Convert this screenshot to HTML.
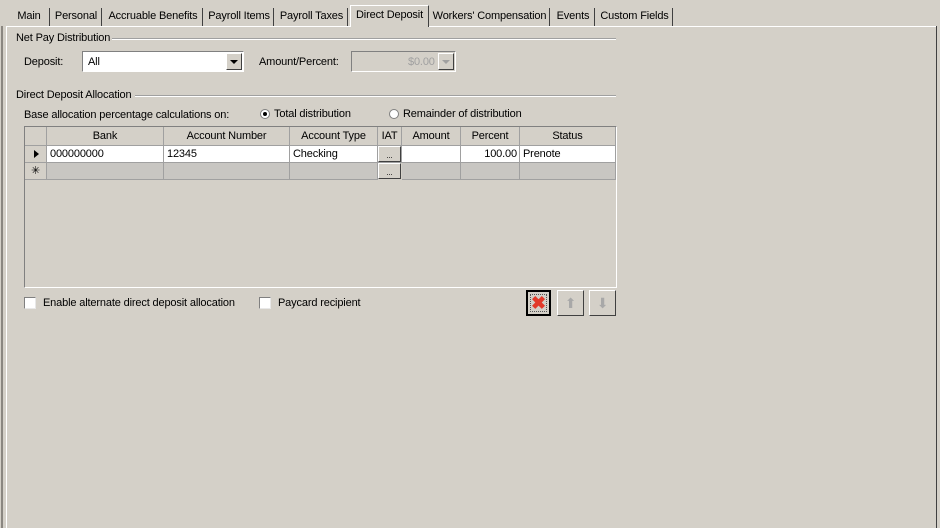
<!DOCTYPE html>
<html><head><style>
*{margin:0;padding:0;box-sizing:border-box}
body{width:940px;height:528px;background:#d4d0c8;font-family:"Liberation Sans",sans-serif;font-size:11px;letter-spacing:-0.15px;color:#000;position:relative;overflow:hidden}
.a{position:absolute;white-space:nowrap}
.tab{position:absolute;top:8px;height:18px;border-right:1px solid #404040;padding:2px 0 0 0;text-align:center;line-height:13px}
.line{position:absolute;height:2px;border-top:1px solid #a0a0a0;border-bottom:1px solid #fff}
.sunk{position:absolute;border-top:1px solid #808080;border-left:1px solid #808080;border-right:1px solid #fff;border-bottom:1px solid #fff}
.cb{position:absolute;width:12px;height:12px;background:#fff;border-top:1px solid #808080;border-left:1px solid #808080;border-right:1px solid #e8e8e8;border-bottom:1px solid #e8e8e8}
.c{position:absolute;border-right:1px solid #a0a0a0;border-bottom:1px solid #a0a0a0;line-height:16px;padding-left:3px;overflow:hidden}
.g{background:#c8c6c2}
.btn{position:absolute;border-top:1px solid #fff;border-left:1px solid #fff;border-right:1px solid #404040;border-bottom:1px solid #404040;background:#d4d0c8}
</style></head><body>
<div class="a" style="left:1px;top:26px;width:2px;height:502px;background:#8a8680"></div>
<div class="a" style="left:6px;top:26px;width:1px;height:502px;background:#fff"></div>
<div class="a" style="left:6px;top:26px;width:931px;height:1px;background:#fff"></div>
<div class="a" style="left:936px;top:26px;width:1px;height:502px;background:#404040"></div>
<div class="tab" style="left:9px;width:41px">Main</div>
<div class="tab" style="left:51px;width:51px">Personal</div>
<div class="tab" style="left:104px;width:99px">Accruable Benefits</div>
<div class="tab" style="left:205px;width:69px">Payroll Items</div>
<div class="tab" style="left:276px;width:72px">Payroll Taxes</div>
<div class="tab" style="left:350px;top:5px;height:22px;width:79px;background:#d4d0c8;padding-top:3px;border-top:1px solid #fff;border-left:1px solid #fff">Direct Deposit</div>
<div class="tab" style="left:430px;width:120px">Workers' Compensation</div>
<div class="tab" style="left:552px;width:43px">Events</div>
<div class="tab" style="left:597px;width:76px">Custom Fields</div>
<div class="a" style="left:16px;top:32px">Net Pay Distribution</div>
<div class="line" style="left:112px;top:38px;width:504px"></div>
<div class="a" style="left:24px;top:56px">Deposit:</div>
<div class="sunk" style="left:82px;top:51px;width:162px;height:21px;background:#fff"></div>
<div class="a" style="left:88px;top:56px">All</div>
<div class="btn" style="left:226px;top:53px;width:16px;height:17px"></div>
<div class="a" style="left:230px;top:60px;width:0;height:0;border-left:4px solid transparent;border-right:4px solid transparent;border-top:4px solid #000"></div>
<div class="a" style="left:259px;top:56px">Amount/Percent:</div>
<div class="sunk" style="left:351px;top:51px;width:105px;height:21px"></div>
<div class="a" style="left:408px;top:56px;color:#a0a0a0">$0.00</div>
<div class="btn" style="left:438px;top:53px;width:16px;height:17px"></div>
<div class="a" style="left:442px;top:60px;width:0;height:0;border-left:4px solid transparent;border-right:4px solid transparent;border-top:4px solid #a0a0a0"></div>
<div class="a" style="left:16px;top:89px">Direct Deposit Allocation</div>
<div class="line" style="left:135px;top:95px;width:481px"></div>
<div class="a" style="left:24px;top:109px">Base allocation percentage calculations on:</div>
<div class="a" style="left:260px;top:109px;width:10px;height:10px;border-radius:50%;background:#fff;border:1px solid #808080"></div>
<div class="a" style="left:263px;top:112px;width:4px;height:4px;border-radius:50%;background:#000"></div>
<div class="a" style="left:274px;top:108px">Total distribution</div>
<div class="a" style="left:389px;top:109px;width:10px;height:10px;border-radius:50%;background:#fff;border:1px solid #808080"></div>
<div class="a" style="left:403px;top:108px">Remainder of distribution</div>
<div class="a" style="left:24px;top:126px;width:593px;height:162px;border:1px solid #808080;border-right-color:#fff;border-bottom-color:#fff;background:#d4d0c8"></div>
<div class="c" style="left:25px;top:127px;width:22px;height:19px"></div>
<div class="c" style="left:47px;top:127px;width:117px;height:19px;text-align:center;padding:1px 0">Bank</div>
<div class="c" style="left:164px;top:127px;width:126px;height:19px;text-align:center;padding:1px 0">Account Number</div>
<div class="c" style="left:290px;top:127px;width:88px;height:19px;text-align:center;padding:1px 0">Account Type</div>
<div class="c" style="left:378px;top:127px;width:24px;height:19px;text-align:center;padding:1px 0">IAT</div>
<div class="c" style="left:402px;top:127px;width:59px;height:19px;text-align:center;padding:1px 0">Amount</div>
<div class="c" style="left:461px;top:127px;width:59px;height:19px;text-align:center;padding:1px 0">Percent</div>
<div class="c" style="left:520px;top:127px;width:96px;height:19px;text-align:center;padding:1px 0">Status</div>
<div class="c" style="left:25px;top:146px;width:22px;height:17px"></div>
<div class="a" style="left:34px;top:150px;width:0;height:0;border-top:4px solid transparent;border-bottom:4px solid transparent;border-left:5px solid #000"></div>
<div class="c" style="left:47px;top:146px;width:117px;height:17px;background:#fff">000000000</div>
<div class="c" style="left:164px;top:146px;width:126px;height:17px;background:#fff">12345</div>
<div class="c" style="left:290px;top:146px;width:88px;height:17px;background:#fff">Checking</div>
<div class="c" style="left:378px;top:146px;width:24px;height:17px"></div>
<div class="btn" style="left:378px;top:146px;width:23px;height:16px;font-size:8px;text-align:center;line-height:18px">...</div>
<div class="c" style="left:402px;top:146px;width:59px;height:17px;background:#fff"></div>
<div class="c" style="left:461px;top:146px;width:59px;height:17px;background:#fff;text-align:right;padding-right:2px">100.00</div>
<div class="c" style="left:520px;top:146px;width:96px;height:17px;background:#fff">Prenote</div>
<div class="c" style="left:25px;top:163px;width:22px;height:17px;text-align:center;padding:0">✳</div>
<div class="c g" style="left:47px;top:163px;width:117px;height:17px"></div>
<div class="c g" style="left:164px;top:163px;width:126px;height:17px"></div>
<div class="c g" style="left:290px;top:163px;width:88px;height:17px"></div>
<div class="btn" style="left:378px;top:163px;width:23px;height:16px;font-size:8px;text-align:center;line-height:18px">...</div>
<div class="c g" style="left:402px;top:163px;width:59px;height:17px"></div>
<div class="c g" style="left:461px;top:163px;width:59px;height:17px"></div>
<div class="c g" style="left:520px;top:163px;width:96px;height:17px"></div>
<div class="cb" style="left:24px;top:297px"></div>
<div class="a" style="left:43px;top:297px">Enable alternate direct deposit allocation</div>
<div class="cb" style="left:259px;top:297px"></div>
<div class="a" style="left:278px;top:297px">Paycard recipient</div>
<div class="a" style="left:526px;top:290px;width:25px;height:26px;border:2px solid #000;background:#d4d0c8"></div>
<div class="a" style="left:530px;top:294px;width:17px;height:18px;border:1px dotted #555;color:#e23a2a;font-size:18px;font-weight:bold;text-align:center;line-height:17px">✖</div>
<div class="btn" style="left:557px;top:290px;width:27px;height:26px;color:#a8a8a8;text-align:center;line-height:24px;font-size:14px">⬆</div>
<div class="btn" style="left:589px;top:290px;width:27px;height:26px;color:#a8a8a8;text-align:center;line-height:24px;font-size:14px">⬇</div>
</body></html>
